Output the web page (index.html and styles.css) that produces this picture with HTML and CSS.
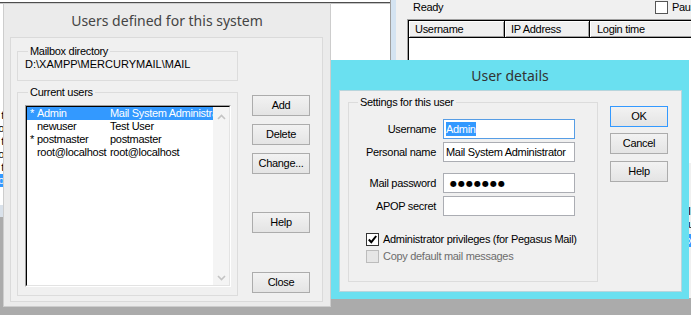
FILE: index.html
```html
<!DOCTYPE html>
<html>
<head>
<meta charset="utf-8">
<title>Mercury users</title>
<link rel="stylesheet" href="styles.css">
</head>
<body>
<div class="desktop">

  <section class="win back-left">
    <div class="bl-topline"></div>
    <div class="bl-rows">
      <div class="bl-row">t</div>
      <div class="bl-row">o</div>
      <div class="bl-row">t</div>
      <div class="bl-row">o</div>
      <div class="bl-row">t</div>
      <div class="bl-row sel">o</div>
    </div>
    <div class="bl-foot"></div>
  </section>

  <section class="win back-right">
    <div class="br-frame"></div>
    <div class="br-panel">
      <div class="br-status">
        <span class="br-ready">Ready</span>
        <span class="br-pause"><span class="cb-plain"></span>Pause</span>
      </div>
      <div class="listview">
        <div class="lv-inner">
          <div class="lv-head">
            <div class="lv-col c1">Username</div>
            <div class="lv-col c2">IP Address</div>
            <div class="lv-col c3">Login time</div>
          </div>
          <div class="lv-body"></div>
        </div>
      </div>
      <div class="br-lower">
        <div class="br-line">Info</div>
        <div class="br-line">user</div>
        <div class="br-line sel">x</div>
      </div>
    </div>
  </section>

  <section class="win users">
    <header class="title">Users defined for this system</header>
    <div class="client users-client">
      <div class="col-main">
        <fieldset class="group mailbox">
          <legend>Mailbox directory</legend>
          <div class="path">D:\XAMPP\MERCURYMAIL\MAIL</div>
        </fieldset>
        <fieldset class="group current">
          <legend>Current users</legend>
          <div class="listbox">
            <div class="lb-inner">
              <ul class="lb-items">
                <li class="lb-row sel"><span class="star">*</span><span>Admin</span><span>Mail System Administrator</span></li>
                <li class="lb-row"><span class="star"></span><span>newuser</span><span>Test User</span></li>
                <li class="lb-row"><span class="star">*</span><span>postmaster</span><span>postmaster</span></li>
                <li class="lb-row"><span class="star"></span><span>root@localhost</span><span>root@localhost</span></li>
              </ul>
              <div class="vscroll">
                <svg width="9" height="6" viewBox="0 0 9 6"><polyline points="1,5 4.5,1.5 8,5" fill="none" stroke="#c4c4c4" stroke-width="1.6"/></svg>
                <svg width="9" height="6" viewBox="0 0 9 6"><polyline points="1,1 4.5,4.5 8,1" fill="none" stroke="#c4c4c4" stroke-width="1.6"/></svg>
              </div>
            </div>
          </div>
        </fieldset>
      </div>
      <div class="col-buttons">
        <button class="btn">Add</button>
        <button class="btn">Delete</button>
        <button class="btn">Change...</button>
        <button class="btn help">Help</button>
        <button class="btn close">Close</button>
      </div>
    </div>
  </section>

  <section class="win details">
    <header class="title">User details</header>
    <div class="client details-client">
      <fieldset class="group settings">
        <legend>Settings for this user</legend>
        <div class="form">
          <label class="flabel">Username</label>
          <div class="tb focus"><span class="seltext">Admin</span></div>
          <label class="flabel">Personal name</label>
          <div class="tb">Mail System Administrator</div>
          <label class="flabel gap">Mail password</label>
          <div class="tb gap pw">●●●●●●●</div>
          <label class="flabel">APOP secret</label>
          <div class="tb"></div>
        </div>
        <div class="checks">
          <div class="check"><span class="cb"><svg width="11" height="11" viewBox="0 0 11 11"><polyline points="1.8,5.5 4.3,8.2 9.2,2" fill="none" stroke="#000" stroke-width="2"/></svg></span>Administrator privileges (for Pegasus Mail)</div>
          <div class="check disabled"><span class="cb"></span>Copy default mail messages</div>
        </div>
      </fieldset>
      <div class="col-buttons">
        <button class="btn default">OK</button>
        <button class="btn">Cancel</button>
        <button class="btn help2">Help</button>
      </div>
    </div>
  </section>

</div>
</body>
</html>
```

FILE: styles.css
```css
* { box-sizing: border-box; }
html, body { margin: 0; padding: 0; }
body {
  width: 691px;
  height: 315px;
  overflow: hidden;
  background: #ababab;
  font-family: "Liberation Sans", Arial, sans-serif;
  font-size: 11px;
  line-height: 13px;
  letter-spacing: -0.3px;
  color: #000;
}
.desktop { position: relative; width: 691px; height: 315px; overflow: hidden; }
.win { position: absolute; }

/* window behind, left */
.back-left {
  left: -10px; top: -10px; width: 401px; height: 227px;
  background: #fff; border-right: 1px solid #a0a0a0;
  display: flex; flex-direction: column;
}
.bl-topline { margin-top: 12px; height: 2px; border-top: 1px solid #4d4d4d; border-bottom: 1px solid #c4c4c4; }
.bl-rows { margin-top: 105px; width: 14px; }
.bl-row { height: 13px; text-align: right; }
.bl-row.sel { background: #3399ff; color: #fff; }
.bl-foot { margin-top: 18px; height: 12px; background: #d9e1ea; }

/* window behind, right */
.back-right { left: 391px; top: -10px; width: 310px; height: 308px; display: flex; }
.br-frame { width: 5px; flex: none; background: #d4e3f1; }
.br-panel { flex: 1; min-width: 0; background: #f0f0f0; padding-top: 10px; display: flex; flex-direction: column; overflow: hidden; }
.br-status { height: 14px; display: flex; align-items: center; padding-left: 17px; white-space: nowrap; }
.br-ready { width: 242px; flex: none; }
.br-pause { display: flex; align-items: center; gap: 4px; flex: none; }
.cb-plain { width: 13px; height: 13px; border: 1px solid #555; background: #fff; flex: none; }
.listview { margin: 5px 0 0 11px; border-top: 1px solid #a0a0a0; border-left: 1px solid #a0a0a0; }
.lv-inner { border-top: 1px solid #000; border-left: 1px solid #000; }
.lv-head { display: flex; height: 17px; }
.lv-col {
  height: 17px; background: #f0f0f0; flex: none;
  border-right: 1px solid #000; border-bottom: 1px solid #000;
  box-shadow: inset 1px 1px 0 #fff, inset -1px -1px 0 #a0a0a0;
  padding-left: 6px; line-height: 16px; white-space: nowrap;
}
.c1 { width: 96px; }
.c2 { width: 85px; }
.c3 { flex: 1; padding-left: 7px; }
.lv-body { height: 125px; background: #fff; }
.br-lower { margin: 42px 0 0 292px; }
.br-line { height: 13px; white-space: nowrap; }
.br-line.sel { margin-top: 3px; background: #3399ff; color: #fff; }

/* shared dialog parts */
.title {
  font-family: "Noto Sans", "Open Sans", sans-serif;
  font-size: 14px;
  letter-spacing: 0;
  display: flex; align-items: center; justify-content: center;
  flex: none;
}
.client { background: #f0f0f0; }
.group { margin: 0; border: 1px solid #dcdcdc; min-width: 0; }
.group legend { padding: 0 2px; line-height: 13px; }
.col-buttons { display: flex; flex-direction: column; }
.btn {
  width: 58px; height: 21px; margin: 0; padding: 0;
  border: 1px solid #acacac;
  background: linear-gradient(#f2f2f2, #e4e4e4);
  font: inherit; letter-spacing: inherit; color: #000;
  display: flex; align-items: center; justify-content: center;
}

/* Users defined for this system */
.users {
  left: 3px; top: 3px; width: 328px; height: 304px;
  background: #ebebeb; border: 1px solid #cdcdcd;
  display: flex; flex-direction: column;
}
.users .title { height: 33px; color: #444; }
.users-client {
  margin: 0 7px 4px 6px; flex: 1;
  border: 1px solid #dadada;
  display: grid; grid-template-columns: 221px 58px; column-gap: 14px;
  padding-left: 6px; align-items: start;
}
.col-main { display: flex; flex-direction: column; }
.mailbox { margin-top: 7px; height: 36px; padding: 0 0 0 7px; }
.mailbox legend, .current legend { margin-left: 3px; }
.path { letter-spacing: 0; }
.current { margin-top: 5px; height: 210px; padding: 6px 7px 0 7px; }
.listbox {
  width: 206px; height: 182px;
  border-top: 1px solid #a0a0a0; border-left: 1px solid #a0a0a0;
  border-right: 1px solid #fff; border-bottom: 1px solid #fff;
  background: #fff; display: flex;
}
.lb-inner {
  flex: 1; display: flex;
  border-top: 1px solid #000; border-left: 1px solid #000;
  border-right: 1px solid #e3e3e3; border-bottom: 1px solid #e3e3e3;
}
.lb-items { width: 186px; margin: 0; padding: 0; list-style: none; overflow: hidden; flex: none; }
.lb-row { display: grid; grid-template-columns: 10px 73px 1fr; height: 13px; white-space: nowrap; overflow: hidden; }
.lb-row.sel { background: #3399ff; color: #fff; }
.star { padding-left: 3px; }
.vscroll {
  flex: 1; background: #f4f4f4;
  display: flex; flex-direction: column; justify-content: space-between; align-items: center;
  padding: 7px 0 4px;
}
.users .col-buttons { padding-top: 57px; }
.users .btn + .btn { margin-top: 8px; }
.users .btn.help { margin-top: 38px; }
.users .btn.close { margin-top: 39px; }

/* User details */
.details {
  left: 331px; top: 60px; width: 358px; height: 239px;
  background: #6ae0f0;
  display: flex; flex-direction: column;
}
.details .title { height: 30px; color: #333; }
.details-client {
  margin: 0 7px 7px 8px; flex: 1;
  border: 1px solid #b8d5dc;
  display: grid; grid-template-columns: 250px 58px; column-gap: 12px;
  padding-left: 8px; align-items: start;
}
.settings { margin-top: 5px; height: 186px; padding: 10px 0 0 0; }
.settings legend { margin-left: 9px; }
.form {
  display: grid; grid-template-columns: 87px 132px;
  column-gap: 7px; row-gap: 3px; align-items: center;
}
.flabel { text-align: right; white-space: nowrap; }
.form .gap { margin-top: 8px; }
.tb {
  height: 20px; border: 1px solid #abadb3; background: #fff;
  padding-left: 2px; display: flex; align-items: center;
  white-space: nowrap; overflow: hidden;
}
.tb.focus { border-color: #569de5; }
.seltext { background: #3399ff; color: #fff; line-height: 14px; }
.pw { padding-left: 6px; font-family: "DejaVu Sans", sans-serif; font-size: 8px; letter-spacing: 1px; }
.checks { margin: 17px 0 0 17px; display: flex; flex-direction: column; gap: 4px; }
.check { display: flex; align-items: center; gap: 4px; height: 13px; white-space: nowrap; }
.cb { width: 13px; height: 13px; border: 1px solid #333; background: #fff; flex: none; display: flex; }
.check.disabled { color: #6d6d6d; }
.check.disabled .cb { border-color: #bcbcbc; background: #e6e6e6; }
.details .col-buttons { padding-top: 15px; }
.details .btn + .btn { margin-top: 6px; }
.details .btn.help2 { margin-top: 7px; }
.btn.default { border-color: #3399ff; }
```
